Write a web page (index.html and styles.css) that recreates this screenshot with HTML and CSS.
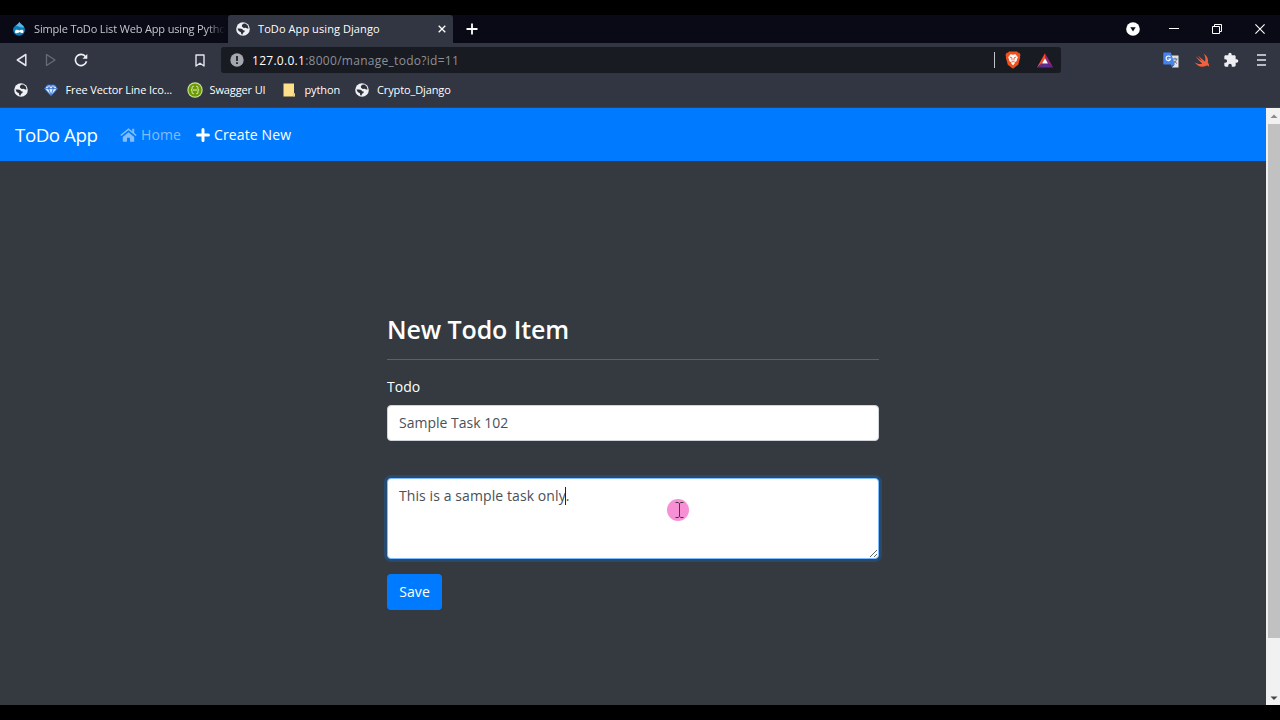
FILE: index.html
```html
<!DOCTYPE html>
<html lang="en">
<head>
  <meta charset="UTF-8">
  <meta name="viewport" content="width=device-width, initial-scale=1.0">
  <title>ToDo App using Django</title>
  <link rel="stylesheet" href="styles.css">
</head>
<body>
  <svg class="defs" aria-hidden="true">
    <symbol id="globe" viewBox="0 0 14 14">
      <circle cx="7" cy="7" r="6.8" fill="#eef0f3"/>
      <path d="M1.500 6.600l2.500-.2 2.200.6.900 1.200 1.600.3-.2 1.400-1.500.8-.4 1.800-1.300-.2-.4-2-2.200-1.200zM7 1.700l2.400-.1 2.300 2 .9 2.800-1.500.2-1.300-.9-2 .2-1.700-1.100-.3-1.300z" fill="#2d303c"/>
    </symbol>
  </svg>

  <!-- Tabs -->
  <div class="tabs">
    <div class="tab">
      <svg class="favicon" viewBox="0 0 14 15"><path d="M7.500 0c.6 2 5.900 3.500 5.900 8.300A6.400 6.400 0 0 1 .6 8.300C.6 4.500 5.500 3.500 7.500 0z" fill="#0b7fbe"/><path d="M7.500 0c.6 2 3.500 3 5 5.500C9 7 5 3.500 3 4.100 5 2.800 6.700 1.700 7.500 0z" fill="#59b7e4"/><path d="M2.700 10.500c0-2.600 2.800-2.500 4.700-1.300 2-1.400 4.600-1 4.400 1.200-.2 2.200-2.500 1.700-4 .4-1.900 1.500-5.100 2-5.100-.3z" fill="#fff"/></svg>
      <span class="tab-title">Simple ToDo List Web App using Pytho</span>
    </div>
    <div class="tab active">
      <svg class="favicon"><use href="#globe"/></svg>
      <span class="tab-title">ToDo App using Django</span>
      <svg class="close" viewBox="0 0 8 8"><path d="M.7.7l6.600 6.600M7.300.7L.7 7.300" stroke="#fff" stroke-width="1.300"/></svg>
    </div>
    <svg class="new-tab" viewBox="0 0 12 12"><path d="M6 .5v11M.5 6h11" stroke="#fff" stroke-width="1.800"/></svg>
    <div class="window-controls">
      <svg width="14" height="14" viewBox="0 0 14 14"><circle cx="7" cy="7" r="6.800" fill="#fff"/><path d="M4.300 5.300h5.400L7 9.400z" fill="#0a0b14"/></svg>
      <svg width="10" height="10" viewBox="0 0 10 10"><path d="M0 4.500h10" stroke="#fff"/></svg>
      <svg width="10" height="10" viewBox="0 0 10 10" fill="none" stroke="#fff"><path d="M.5 2.500h7v7h-7zM2.500 2.500v-2h7v7h-2"/></svg>
      <svg width="10" height="10" viewBox="0 0 10 10"><path d="M.4.4l9.200 9.200M9.600.4L.4 9.600" stroke="#fff" stroke-width="1.100"/></svg>
    </div>
  </div>

  <!-- Toolbar -->
  <div class="toolbar">
    <div class="nav-icons">
      <svg width="12" height="14" viewBox="0 0 12 14"><path d="M9.800 1.500v11L1.300 7z" fill="none" stroke="#e4e6ec" stroke-width="1.500" stroke-linejoin="round"/></svg>
      <svg width="12" height="14" viewBox="0 0 12 14"><path d="M1.500 1.500v11L10 7z" fill="none" stroke="#686b76" stroke-width="1.300" stroke-linejoin="round"/></svg>
      <svg width="14" height="14" viewBox="0 0 14 14"><path d="M11.600 3.700A5.600 5.600 0 1 0 12.500 8.300" fill="none" stroke="#f0f1f5" stroke-width="1.600"/><path d="M13.300.9v4.800H8.500z" fill="#f0f1f5"/></svg>
    </div>
    <svg class="bookmark" viewBox="0 0 10 13"><path d="M1 1h8v11L5 9.200 1 12z" fill="none" stroke="#e4e6ec" stroke-width="1.400" stroke-linejoin="round"/></svg>
    <div class="address">
      <svg class="info" viewBox="0 0 14 14"><circle cx="7" cy="7" r="6.700" fill="#a4a7ae"/><path d="M7 3v5M7 9.300v1.700" stroke="#191b22" stroke-width="1.700"/></svg>
      <span class="url"><b>127.0.0.1</b>:8000/manage_todo?id=11</span>
      <div class="shields">
        <svg width="16" height="18" viewBox="0 0 16 18"><path d="M4 .5h8l1.200 1.300 1.200-.1 1.100 2.400-.5 1.500.2.800-2 7.300L8 17.700l-5.200-4L.8 6.400l.2-.8-.5-1.500 1.100-2.400 1.200.1z" fill="#f0501e"/><path d="M5.500 3.200l2.500.5 2.500-.5 2.400 3-1 2-.2 1.800-2.200 1.500.1 1.200L8 14.200l-1.600-1.500.1-1.200L4.300 10l-.2-1.800-1-2z" fill="#fff"/><path d="M4.700 6l2.100.7.3 2.600M11.300 6l-2.100.7-.3 2.600M6.500 10.200L8 11l1.500-.8" fill="none" stroke="#f0501e" stroke-width=".9"/></svg>
        <svg width="18" height="15" viewBox="0 0 18 15"><path d="M9 .3v5L6 10.500 1 14.500z" fill="#ff4b24"/><path d="M9 .3l8.200 14.200L12 10.500 9 5.300z" fill="#9b237d"/><path d="M.8 14.500h16.400L12 10.500H6z" fill="#5c2d91"/><path d="M9 5.300l3 5.200H6z" fill="#fff"/></svg>
      </div>
    </div>
    <div class="extensions">
      <svg width="17" height="16" viewBox="0 0 17 16"><path d="M7 3.500h8.500v12H9z" fill="#e2e4e6"/><path d="M9.800 7h4.700M12 5.700V7M13.500 7c-.4 2.300-1.500 3.600-3 4.600M10.800 8.500c.9 1.400 2 2.400 3.200 3" fill="none" stroke="#667584"/><path d="M1 .5h6.800l4 12H1a.7.700 0 0 1-.7-.7V1.200A.7.700 0 0 1 1 .5z" fill="#4484ee"/><path d="M8.500 12.500h3.300L9 15.500z" fill="#2259b5"/><path d="M7.300 5A2.300 2.300 0 1 0 7.600 7H5.400" fill="none" stroke="#fff" stroke-width="1.100"/></svg>
      <svg width="16" height="15" viewBox="0 0 16 15"><path d="M9.500.5c4.500 3 5 6.500 4.300 9 1.500 1.900 1.400 3.500 1.100 4.200-1-1.500-2.200-1.300-3.300-.7C7.500 15 3.200 13 .5 9.300c3 2 6 2.200 7.700 1.200C5.500 8.500 3.300 6 1.800 3.300 4 5.300 6 6.800 8 8 6.500 6.300 4.800 4 3.800 2.300c2.200 2.400 4.800 4.500 7.300 6.200C11.900 5.700 11 2.700 9.500.5z" fill="#f2603c"/></svg>
      <svg width="16" height="16" viewBox="0 0 24 24"><path d="M20.500 11H19V7c0-1.100-.9-2-2-2h-4V3.500a2.500 2.500 0 0 0-5 0V5H4c-1.100 0-2 .9-2 2v3.800h1.500a2.700 2.700 0 0 1 0 5.400H2V20c0 1.100.9 2 2 2h3.800v-1.500a2.700 2.700 0 0 1 5.400 0V22H17c1.100 0 2-.9 2-2v-4h1.500a2.500 2.500 0 0 0 0-5z" fill="#eceef2"/></svg>
      <svg width="9" height="12" viewBox="0 0 9 12"><path d="M0 1h9M0 6h9M0 11h9" stroke="#e4e6ec" stroke-width="1.600"/></svg>
    </div>
  </div>

  <!-- Bookmarks -->
  <div class="bookmarks">
    <svg class="bm-globe" width="14" height="14"><use href="#globe"/></svg>
    <div class="bm bm-vector">
      <svg width="14" height="14" viewBox="0 0 14 14"><path d="M3.300 2h7.400l2.800 3.700L7 12.800.5 5.700z" fill="#d9ebff" stroke="#2865c8"/><path d="M.8 5.600h12.400M3.500 2.200l1.200 3.400L7 12.300l2.300-6.700 1.200-3.400M4.700 5.600L7 2.200l2.300 3.400" fill="none" stroke="#2865c8" stroke-width=".8"/></svg>
      <span>Free Vector Line Ico...</span>
    </div>
    <div class="bm bm-swagger">
      <svg width="16" height="16" viewBox="0 0 16 16"><circle cx="8" cy="8" r="7.700" fill="#c9e59b"/><circle cx="8" cy="8" r="6.600" fill="#6d9a00"/><path d="M6.800 4.300c-1.600 0-1.700.4-1.700 1.900C5.100 7.500 5 8 4 8c1 0 1.100.5 1.100 1.800 0 1.500.1 1.900 1.700 1.900M9.200 4.300c1.600 0 1.700.4 1.700 1.900 0 1.300.1 1.800 1.100 1.800-1 0-1.100.5-1.100 1.800 0 1.500-.1 1.900-1.700 1.900M6 8h4" fill="none" stroke="#e5f3cb"/></svg>
      <span>Swagger UI</span>
    </div>
    <div class="bm bm-python">
      <svg width="12" height="14" viewBox="0 0 12 14"><path d="M.5.500h10.500v9.500l1 .5v3H.5z" fill="#ffe08a"/><path d="M10 10l1.500.8v2.400H10z" fill="#f3c75b"/></svg>
      <span>python</span>
    </div>
    <div class="bm bm-crypto">
      <svg width="14" height="14"><use href="#globe"/></svg>
      <span>Crypto_Django</span>
    </div>
  </div>

  <!-- Page -->
  <div class="viewport">
    <div class="page">
      <nav class="navbar">
        <a class="brand">ToDo App</a>
        <a class="nav-link home"><svg width="17" height="14" viewBox="0 0 17 14"><path d="M8.500 4.300l5.700 4.700v4.200a.6.600 0 0 1-.6.600H10V9.800H7v4H3.400a.6.600 0 0 1-.6-.6V9z"/><path d="M.8 7.500L8.500 1.200l7.700 6.300" fill="none" stroke="currentColor" stroke-width="1.600"/><path d="M12.200.8h2v4.600l-2-1.700z"/></svg><span>Home</span></a>
        <a class="nav-link create"><svg width="14" height="14" viewBox="0 0 14 14"><path d="M7 1.600v10.800M1.600 7h10.800" stroke="currentColor" stroke-width="3" stroke-linecap="round"/></svg><span>Create New</span></a>
      </nav>
      <form class="todo-form">
        <h3>New Todo Item</h3>
        <hr>
        <label for="todo">Todo</label>
        <input class="form-control" type="text" id="todo" value="Sample Task 102">
        <div class="textarea-wrap">
          <textarea class="form-control focused" spellcheck="false">This is a sample task only.</textarea>
          <span class="caret"></span>
          <span class="pointer"><svg width="9" height="16" viewBox="0 0 9 16"><path d="M.5.500h2.700L4.500 1.500 5.800.5h2.700M4.500 1.500v13M.5 15.500h2.700l1.300-1 1.300 1h2.700" fill="none" stroke="#4a3542"/></svg></span>
        </div>
        <button class="save" type="button">Save</button>
      </form>
    </div>
    <div class="scrollbar">
      <svg width="14" height="15" viewBox="0 0 14 15"><path d="M4.500 10h7L8 6.500z" fill="#8b8b8b"/></svg>
      <div class="thumb"></div>
      <svg width="14" height="15" viewBox="0 0 14 15"><path d="M4.500 6.500h7L8 10z" fill="#454545"/></svg>
    </div>
  </div>
</body>
</html>
```

FILE: styles.css
```css
* {
  box-sizing: border-box;
}

body {
  margin: 0;
  padding: 15px 0;
  height: 720px;
  background: #000;
  font-family: "Open Sans", "Noto Sans", sans-serif;
  color: #fff;
  overflow: hidden;
  display: flex;
  flex-direction: column;
}

svg {
  display: block;
  flex: none;
}

.defs {
  position: absolute;
  width: 0;
  height: 0;
}

/* Tabs */
.tabs {
  height: 28px;
  background: #090a15;
  display: flex;
  align-items: center;
}

.tab {
  width: 228px;
  height: 28px;
  padding-left: 12px;
  display: flex;
  align-items: center;
  font-size: 11px;
  white-space: nowrap;
  color: #c3c5cc;
}

.tab.active {
  width: 225px;
  padding: 0 8px;
  background: #323542;
  border-radius: 3px 3px 0 0;
  color: #fff;
}

.favicon {
  width: 14px;
  height: 14px;
  margin-right: 8px;
}

.tab-title {
  width: 194px;
  padding-bottom: 2px;
  letter-spacing: -0.15px;
  -webkit-mask-image: linear-gradient(to right, #000 172px, transparent 191px);
  mask-image: linear-gradient(to right, #000 172px, transparent 191px);
}

.active .tab-title {
  width: auto;
  font-weight: 500;
  letter-spacing: 0.08px;
  -webkit-mask-image: none;
  mask-image: none;
}

.close {
  width: 8px;
  height: 8px;
  margin-left: auto;
  margin-right: -1px;
}

.new-tab {
  width: 12px;
  height: 12px;
  margin-left: 13px;
}

.window-controls {
  display: flex;
  align-items: center;
  margin-left: auto;
  padding-right: 15px;
}

.window-controls svg + svg {
  margin-left: 33px;
}

.window-controls svg:nth-child(2) {
  margin-left: 29px;
}

/* Toolbar */
.toolbar {
  height: 34px;
  background: #323542;
  display: flex;
  align-items: center;
}

.nav-icons {
  display: flex;
  gap: 17px;
  width: 179px;
  padding-left: 16px;
}

.bookmark {
  width: 10px;
  height: 13px;
  margin: 0 17px 0 16px;
}

.address {
  width: 840px;
  height: 26px;
  margin-left: -1px;
  padding: 0 7px 0 9px;
  background: #191b22;
  border-radius: 3px;
  display: flex;
  align-items: center;
}

.info {
  width: 14px;
  height: 14px;
  margin-right: 8px;
}

.url {
  font-size: 12px;
  letter-spacing: 0.28px;
  color: #8d9097;
}

.url b {
  font-weight: 500;
  color: #fff;
}

.shields {
  display: flex;
  align-items: center;
  gap: 15px;
  margin-left: auto;
  padding-left: 10px;
  height: 16px;
  border-left: 1px solid #c0c2c6;
}

.extensions {
  display: flex;
  align-items: center;
  gap: 13px;
  margin-left: auto;
  padding-right: 14px;
}

.extensions svg:first-child {
  margin-right: 1px;
}

.extensions svg:last-child {
  margin-left: 5px;
}

/* Bookmarks */
.bookmarks {
  height: 31px;
  padding: 0 0 5px 14px;
  background: #323542;
  border-bottom: 1px solid #254474;
  display: flex;
  align-items: center;
  font-size: 11px;
}

.bm {
  display: flex;
  align-items: center;
  gap: 8px;
  white-space: nowrap;
  letter-spacing: -0.12px;
}

.bm-vector {
  width: 143px;
  margin-left: 15.500px;
}

.bm-swagger {
  width: 96px;
  gap: 7px;
}

.bm-python {
  width: 72.500px;
  gap: 10px;
}

/* Page */
.viewport {
  flex: 1;
  display: flex;
}

.page {
  width: 1266px;
  background: #343a40;
}

.navbar {
  height: 53px;
  padding-left: 15px;
  background: #007bff;
  display: flex;
  align-items: center;
}

.brand {
  width: 105px;
  font-size: 18.75px;
  letter-spacing: -0.45px;
}

.nav-link {
  display: flex;
  align-items: center;
  gap: 4px;
  font-size: 14px;
  letter-spacing: 0.12px;
}

.nav-link span {
  padding-bottom: 1px;
}

.home {
  width: 76px;
  color: #80bdff;
}

.nav-link svg {
  fill: currentColor;
}

.todo-form {
  width: 492px;
  margin: 153px 0 0 387px;
  font-size: 14px;
}

.todo-form h3 {
  margin: 0;
  height: 31px;
  line-height: 31px;
  font-size: 25px;
  font-weight: 600;
  letter-spacing: -0.1px;
}

.todo-form hr {
  height: 1px;
  margin: 14px 0 16px;
  border: 0;
  background: #0c72dc;
}

.todo-form label {
  display: block;
  height: 22px;
  margin-bottom: 7px;
  line-height: 22px;
}

.form-control {
  display: block;
  width: 100%;
  height: 36px;
  padding: 5px 11px 7px;
  border: 1px solid #ced4da;
  border-radius: 4px;
  background: #fff;
  color: #495057;
  font: 14px/22px "Open Sans", "Noto Sans", sans-serif;
  outline: none;
}

.textarea-wrap {
  position: relative;
  margin: 37px 0 15px;
}

.form-control.focused {
  height: 81px;
  padding-top: 6px;
  letter-spacing: 0.09px;
  border-color: #80bdff;
  box-shadow: 0 0 0 3px rgba(0, 123, 255, 0.25);
}

.caret {
  position: absolute;
  left: 178px;
  top: 9px;
  width: 1px;
  height: 18px;
  background: #222;
}

.pointer {
  position: absolute;
  left: 280px;
  top: 21px;
  width: 22px;
  height: 22px;
  border-radius: 50%;
  background: #f78fd5;
  display: flex;
  align-items: center;
  justify-content: center;
  padding-left: 3px;
}

.save {
  display: block;
  width: 55px;
  height: 36px;
  padding: 0 0 2px;
  border: 0;
  border-radius: 4px;
  background: #007bff;
  color: #fff;
  font: 14px "Open Sans", "Noto Sans", sans-serif;
  letter-spacing: 0.1px;
}

.scrollbar {
  width: 14px;
  background: #f1f1f1;
  display: flex;
  flex-direction: column;
}

.thumb {
  width: 12px;
  height: 514px;
  margin: 1px 0 auto 2px;
  background: #c1c1c1;
}
```
